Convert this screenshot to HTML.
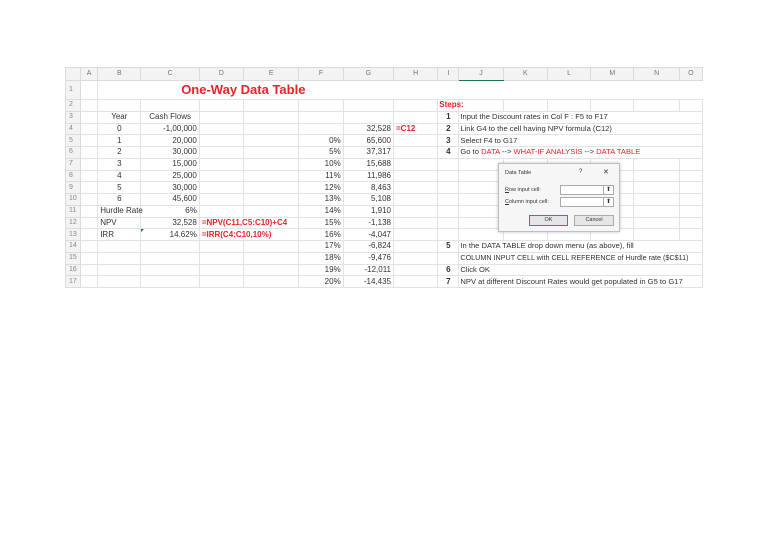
<!DOCTYPE html>
<html><head><style>
body{margin:0;width:768px;height:543px;background:#fff;position:relative;overflow:hidden;font-family:"Liberation Sans",Arial,sans-serif;}
table{position:absolute;left:65px;top:67px;width:638px;border-collapse:collapse;table-layout:fixed;font-size:8px;color:#333;}
td{border:1px solid #e3e3e3;padding:0 2px;height:10.75px;line-height:10px;white-space:nowrap;overflow:visible;}
tr.h td{background:#f3f3f3;color:#777;text-align:center;height:12px;border-color:#dcdcdc;font-size:7px}
td.rh{background:#f3f3f3;color:#888;text-align:left;padding-left:3px;border-color:#dcdcdc;font-size:7px}
.r{text-align:right}.c{text-align:center}
.red{color:#e8232a;font-weight:bold}
.rd{color:#e8232a}
.b{font-weight:bold}
.s{padding-left:1px;font-size:7.6px}
tr.t td{height:18px}
.dlg{position:absolute;left:498px;top:163px;width:120px;height:67px;background:#f6f6f6;border:1px solid #bfbfbf;box-shadow:0 0 3px rgba(0,0,0,.25);font-size:5.5px;color:#333}
.dlg div{position:absolute}
.in{background:#fff;border:1px solid #aaa;height:8px}
.btn{border:1px solid #aaa;background:#e6e6e6;text-align:center;line-height:9px;height:9px}
</style></head><body>
<table>
<colgroup><col style="width:15px"><col style="width:17px"><col style="width:43px"><col style="width:58px"><col style="width:44px"><col style="width:55px"><col style="width:44px"><col style="width:50px"><col style="width:44px"><col style="width:21px"><col style="width:44px"><col style="width:44px"><col style="width:43px"><col style="width:43px"><col style="width:45px"><col style="width:23px"></colgroup>
<tr class="h"><td></td><td>A</td><td>B</td><td>C</td><td>D</td><td>E</td><td>F</td><td>G</td><td>H</td><td>I</td><td style="border-bottom:1px solid #217346">J</td><td>K</td><td>L</td><td>M</td><td>N</td><td>O</td></tr>
<tr class="t"><td class="rh">1</td><td></td><td colspan="14" style="padding-left:83px;font-size:13px;font-weight:bold;color:#e8232a;border-right:none">One-Way Data Table</td></tr>
<tr><td class="rh">2</td><td></td><td></td><td></td><td></td><td></td><td></td><td></td><td></td><td class="red" style="padding-left:1px">Steps:</td><td></td><td></td><td></td><td></td><td></td><td></td></tr>
<tr><td class="rh">3</td><td></td><td class="c">Year</td><td class="c">Cash Flows</td><td></td><td></td><td></td><td></td><td></td><td class="c b">1</td><td colspan="6" class="s">Input the Discount rates in Col F : F5 to F17</td></tr>
<tr><td class="rh">4</td><td></td><td class="c">0</td><td class="r">-1,00,000</td><td></td><td></td><td></td><td class="r">32,528</td><td class="red">=C12</td><td class="c b">2</td><td colspan="6" class="s">Link G4 to the cell having NPV formula (C12)</td></tr>
<tr><td class="rh">5</td><td></td><td class="c">1</td><td class="r">20,000</td><td></td><td></td><td class="r">0%</td><td class="r">65,600</td><td></td><td class="c b">3</td><td colspan="6" class="s">Select F4 to G17</td></tr>
<tr><td class="rh">6</td><td></td><td class="c">2</td><td class="r">30,000</td><td></td><td></td><td class="r">5%</td><td class="r">37,317</td><td></td><td class="c b">4</td><td colspan="6" class="s">Go to <span class="rd">DATA</span> --&gt; <span class="rd">WHAT-IF ANALYSIS</span> --&gt; <span class="rd">DATA TABLE</span></td></tr>
<tr><td class="rh">7</td><td></td><td class="c">3</td><td class="r">15,000</td><td></td><td></td><td class="r">10%</td><td class="r">15,688</td><td></td><td></td><td></td><td></td><td></td><td></td><td></td><td></td></tr>
<tr><td class="rh">8</td><td></td><td class="c">4</td><td class="r">25,000</td><td></td><td></td><td class="r">11%</td><td class="r">11,986</td><td></td><td></td><td></td><td></td><td></td><td></td><td></td><td></td></tr>
<tr><td class="rh">9</td><td></td><td class="c">5</td><td class="r">30,000</td><td></td><td></td><td class="r">12%</td><td class="r">8,463</td><td></td><td></td><td></td><td></td><td></td><td></td><td></td><td></td></tr>
<tr><td class="rh">10</td><td></td><td class="c">6</td><td class="r">45,600</td><td></td><td></td><td class="r">13%</td><td class="r">5,108</td><td></td><td></td><td></td><td></td><td></td><td></td><td></td><td></td></tr>
<tr><td class="rh">11</td><td></td><td>Hurdle Rate</td><td class="r">6%</td><td></td><td></td><td class="r">14%</td><td class="r">1,910</td><td></td><td></td><td></td><td></td><td></td><td></td><td></td><td></td></tr>
<tr><td class="rh">12</td><td></td><td>NPV</td><td class="r">32,528</td><td class="red" colspan="2">=NPV(C11,C5:C10)+C4</td><td class="r">15%</td><td class="r">-1,138</td><td></td><td></td><td></td><td></td><td></td><td></td><td></td><td></td></tr>
<tr><td class="rh">13</td><td></td><td>IRR</td><td class="r" style="position:relative"><span style="position:absolute;left:0;top:0;border-top:3px solid #217346;border-right:3px solid transparent"></span>14.62%</td><td class="red" colspan="2">=IRR(C4:C10,10%)</td><td class="r">16%</td><td class="r">-4,047</td><td></td><td></td><td></td><td></td><td></td><td></td><td></td><td></td></tr>
<tr><td class="rh">14</td><td></td><td></td><td></td><td></td><td></td><td class="r">17%</td><td class="r">-6,824</td><td></td><td class="c b">5</td><td colspan="6" class="s">In the DATA TABLE drop down menu (as above), fill</td></tr>
<tr><td class="rh">15</td><td></td><td></td><td></td><td></td><td></td><td class="r">18%</td><td class="r">-9,476</td><td></td><td></td><td colspan="6" class="s" style="font-size:7.2px">COLUMN INPUT CELL with CELL REFERENCE of Hurdle rate ($C$11)</td></tr>
<tr><td class="rh">16</td><td></td><td></td><td></td><td></td><td></td><td class="r">19%</td><td class="r">-12,011</td><td></td><td class="c b">6</td><td colspan="6" class="s">Click OK</td></tr>
<tr><td class="rh">17</td><td></td><td></td><td></td><td></td><td></td><td class="r">20%</td><td class="r">-14,435</td><td></td><td class="c b">7</td><td colspan="6" class="s">NPV at different Discount Rates would get populated in G5 to G17</td></tr>
</table>
<div class="dlg">
<div style="left:6px;top:6px">Data Table</div>
<div style="left:80px;top:5px;font-size:6px">?</div>
<div style="left:104px;top:4px;font-size:7px">✕</div>
<div style="left:6px;top:23px"><u>R</u>ow input cell:</div>
<div class="in" style="left:61px;top:21px;width:42px"></div>
<div class="in" style="left:104px;top:21px;width:9px;font-size:6px;text-align:center;line-height:8px">⬆</div>
<div style="left:6px;top:35px"><u>C</u>olumn input cell:</div>
<div class="in" style="left:61px;top:33px;width:42px"></div>
<div class="in" style="left:104px;top:33px;width:9px;font-size:6px;text-align:center;line-height:8px">⬆</div>
<div class="btn" style="left:30px;top:51px;width:37px;border-color:#3c7fb1">OK</div>
<div class="btn" style="left:75px;top:51px;width:38px">Cancel</div>
</div>
</body></html>
